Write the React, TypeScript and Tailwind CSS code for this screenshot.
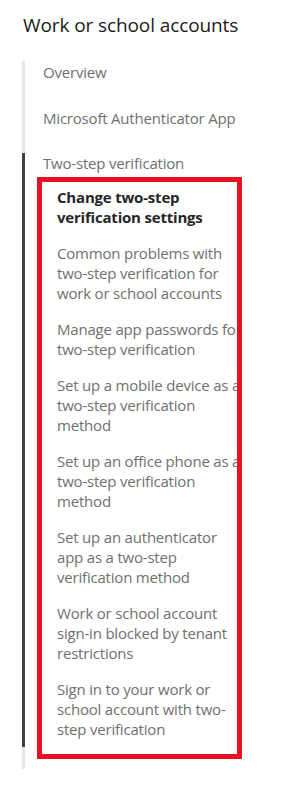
import React from "react";

const items: string[][] = [
  ["Common problems with", "two-step verification for", "work or school accounts"],
  ["Manage app passwords for", "two-step verification"],
  ["Set up a mobile device as a", "two-step verification", "method"],
  ["Set up an office phone as a", "two-step verification", "method"],
  ["Set up an authenticator", "app as a two-step", "verification method"],
  ["Work or school account", "sign-in blocked by tenant", "restrictions"],
  ["Sign in to your work or", "school account with two-", "step verification"],
];

export default function App() {
  return (
    <div className="w-[282px] h-[786px] bg-white overflow-hidden font-['Open_Sans',sans-serif]">
      <h2 className="pl-[23px] pt-[11px] text-[19px] leading-[28px] tracking-[-0.1px] text-[#1b1b1b] font-normal">
        Work or school accounts
      </h2>
      <nav className="ml-[22px] mt-[22px] text-[15px] leading-[20px] tracking-[-0.2px]">
        <div className="border-l-[3px] border-[#e5e5e5] pl-[18px] pt-px h-[46px] text-[#707070]">
          Overview
        </div>
        <div className="border-l-[3px] border-[#e5e5e5] pl-[18px] pt-px h-[46px] text-[#707070]">
          Microsoft Authenticator App
        </div>
        <div className="border-l-[3px] border-[#404040]">
          <div className="pl-[18px] text-[#707070]">Two-step verification</div>
          <div className="relative ml-[12px] mt-[4px] -mb-[12px] w-[205px] border-[5px] border-[#e81123] overflow-hidden pl-[15px] pt-[5px] pb-[15px]">
            <ul className="w-[200px] flex flex-col gap-[16px] whitespace-nowrap">
              <li className="font-bold text-[#262626]">
                Change two-step
                <br />
                verification settings
              </li>
              {items.map((lines) => (
                <li key={lines[0]} className="text-[#707070]">
                  {lines.map((l, i) => (
                    <span key={i} className="block">
                      {l}
                    </span>
                  ))}
                </li>
              ))}
            </ul>
          </div>
        </div>
        <div className="border-l-[3px] border-[#e5e5e5] h-[22px]" />
      </nav>
    </div>
  );
}
